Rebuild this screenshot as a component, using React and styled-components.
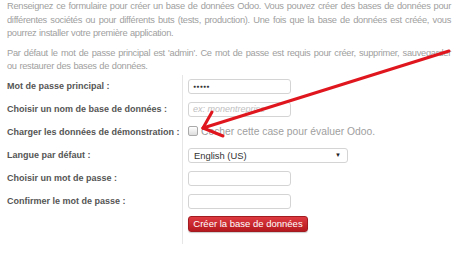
import React from "react";
import styled, { createGlobalStyle } from "styled-components";

const Global = createGlobalStyle`
  html, body { margin: 0; padding: 0; background: #fff; }
  body { font-family: "Liberation Sans", Arial, sans-serif; }
`;

const Page = styled.div`
  position: relative;
  width: 474px;
  height: 272px;
  overflow: hidden;
  padding: 0 23px 0 7px;
  box-sizing: border-box;
`;

const Intro = styled.p`
  margin: 0 0 ${(p) => (p.$last ? "1px" : "6px")};
  font-size: 9.3px;
  letter-spacing: -0.3px;
  word-spacing: 0.4px;
  line-height: 13.5px;
  color: #a0a0a0;
  text-align: justify;
`;

const Form = styled.div`
  display: grid;
  grid-template-columns: 175px 1fr;
`;

const Label = styled.div`
  height: 23px;
  display: flex;
  align-items: center;
  font-size: 9px;
  font-weight: bold;
  color: #555;
  white-space: nowrap;
`;

const Cell = styled.div`
  height: ${(p) => (p.$last ? "31px" : "23px")};
  display: flex;
  align-items: ${(p) => (p.$last ? "flex-start" : "center")};
  padding-left: 5px;
  padding-top: ${(p) => (p.$last ? "3px" : "0")};
  box-sizing: border-box;
  border-left: 1px solid #e6e6e6;
`;

const Field = styled.div`
  width: ${(p) => p.$w || 103}px;
  height: 15px;
  box-sizing: border-box;
  border: 1px solid #d4d4d4;
  border-radius: 3px;
  background: #fff;
  display: flex;
  align-items: center;
  padding: 0 4px;
  font-size: 9.2px;
  color: #333;
`;

const Dots = styled.span`
  font-size: 5px;
  letter-spacing: 0.3px;
  color: #333;
`;

const Placeholder = styled.span`
  font-style: italic;
  color: #c0c0c0;
  font-size: 9px;
`;

const Check = styled.span`
  width: 8px;
  height: 8px;
  border: 1px solid #aaa;
  border-radius: 2px;
  background: linear-gradient(#fff, #ddd);
  margin-right: 3px;
  margin-top: -2px;
`;

const Hint = styled.span`
  font-size: 10.3px;
  color: #a0a0a0;
  margin-top: -2px;
`;

const SelectBox = styled(Field)`
  justify-content: space-between;
  padding: 0 6px 0 5px;
  font-size: 9.4px;
  color: #333;
`;

const Caret = styled.span`
  font-size: 6px;
  color: #222;
`;

const Button = styled.button`
  width: 120px;
  height: 16px;
  padding: 0;
  border: 1px solid #a11b20;
  border-radius: 3px;
  background: linear-gradient(#dd3a40, #b5191f);
  color: #fff;
  font-family: "Liberation Sans", Arial, sans-serif;
  font-size: 9.5px;
  line-height: 13px;
  box-shadow: 0 1px 1px rgba(0,0,0,0.2);
`;

const Arrow = styled.svg`
  position: absolute;
  left: 0;
  top: 0;
  pointer-events: none;
`;

export default function App() {
  return (
    <>
      <Global />
      <Page>
        <Intro>
          Renseignez ce formulaire pour créer un base de données Odoo. Vous pouvez créer des bases de données pour différentes sociétés ou pour différents buts (tests, production). Une fois que la base de données est créée, vous pourrez installer votre première application.
        </Intro>
        <Intro $last>
          Par défaut le mot de passe principal est 'admin'. Ce mot de passe est requis pour créer, supprimer, sauvegarder ou restaurer des bases de données.
        </Intro>
        <Form>
          <Label>Mot de passe principal :</Label>
          <Cell><Field><Dots>●●●●●</Dots></Field></Cell>
          <Label>Choisir un nom de base de données :</Label>
          <Cell><Field><Placeholder>ex: monentreprise</Placeholder></Field></Cell>
          <Label>Charger les données de démonstration :</Label>
          <Cell><Check /><Hint>Cocher cette case pour évaluer Odoo.</Hint></Cell>
          <Label>Langue par défaut :</Label>
          <Cell><SelectBox $w={160}><span>English (US)</span><Caret>▼</Caret></SelectBox></Cell>
          <Label>Choisir un mot de passe :</Label>
          <Cell><Field /></Cell>
          <Label>Confirmer le mot de passe :</Label>
          <Cell><Field /></Cell>
          <Label />
          <Cell $last><Button>Créer la base de données</Button></Cell>
        </Form>
        <Arrow width="474" height="272" viewBox="0 0 474 272">
          <g stroke="#e0161e" strokeWidth="3" strokeLinecap="round" fill="none">
            <line x1="449" y1="51" x2="203" y2="128" />
            <line x1="203" y1="128" x2="212" y2="112" />
            <line x1="203" y1="128" x2="223" y2="136" />
          </g>
        </Arrow>
      </Page>
    </>
  );
}
